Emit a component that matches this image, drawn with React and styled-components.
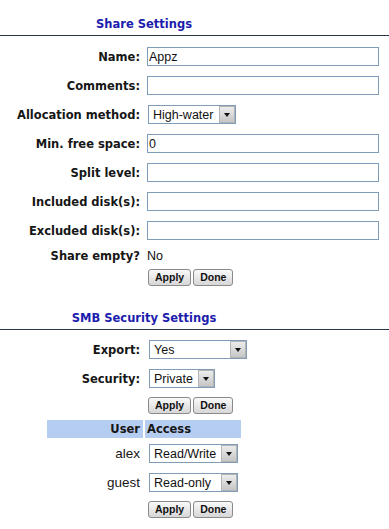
import React from "react";
import styled, { createGlobalStyle } from "styled-components";

const Global = createGlobalStyle`
  html, body { margin: 0; padding: 0; background: #ffffff; }
  body { font-family: "DejaVu Sans", Verdana, sans-serif; color: #161616; }
`;

const Page = styled.div`
  width: 389px;
  display: flex;
  flex-direction: column;
`;

const Section = styled.section`
  display: flex;
  flex-direction: column;
  margin-top: ${(p) => p.$top}px;
`;

const SectionHeader = styled.div`
  border-bottom: 1px solid #26394a;
  padding-bottom: 3px;
`;

const SectionTitle = styled.h2`
  margin: 0;
  width: 288px;
  text-align: center;
  font-family: "DejaVu Sans", Verdana, sans-serif;
  font-weight: bold;
  font-size: 11.5px;
  line-height: 15px;
  color: #1c1cad;
`;

const FormBody = styled.div`
  display: flex;
  flex-direction: column;
  margin-top: ${(p) => p.$top}px;
`;

const Row = styled.div`
  display: grid;
  grid-template-columns: 140px 1fr;
  column-gap: 7px;
  align-items: center;
  height: ${(p) => p.$h}px;
`;

const Label = styled.label`
  text-align: right;
  font-family: "DejaVu Sans", Verdana, sans-serif;
  font-weight: bold;
  font-size: 11.5px;
  color: #161616;
  white-space: nowrap;
`;

const Field = styled.div`
  display: flex;
  align-items: center;
  padding-right: 10px;
  min-width: 0;
`;

const TextInput = styled.input`
  box-sizing: border-box;
  width: 100%;
  height: 19px;
  margin: 0;
  border: 1px solid #7f9db9;
  padding: 0 1px;
  font-family: "Liberation Sans", Arial, sans-serif;
  font-size: 12.5px;
  color: #111;
  background: #fff;
  outline: none;
`;

const ValueText = styled.span`
  font-family: "Liberation Sans", Arial, sans-serif;
  font-size: 12.5px;
  color: #111;
`;

const SelectBox = styled.div`
  box-sizing: border-box;
  display: flex;
  align-items: stretch;
  width: ${(p) => p.$w}px;
  height: 19px;
  margin-left: ${(p) => p.$ml || 0}px;
  border: 1px solid #7f9db9;
  background: #fff;
`;

const NativeSelect = styled.select`
  flex: 1;
  min-width: 0;
  appearance: none;
  -webkit-appearance: none;
  border: none;
  outline: none;
  background: transparent;
  margin: 0;
  padding: 0 0 0 4px;
  font-family: "Liberation Sans", Arial, sans-serif;
  font-size: 12.5px;
  color: #111;
`;

const ArrowBox = styled.span`
  box-sizing: border-box;
  width: 16px;
  margin: 0;
  display: flex;
  align-items: center;
  justify-content: center;
  background: linear-gradient(#ececec, #c6c6c6);
  border: 1px solid #b4b4b4;
  &::after {
    content: "";
    width: 0;
    height: 0;
    border-left: 3.5px solid transparent;
    border-right: 3.5px solid transparent;
    border-top: 4px solid #111;
    margin-top: 1px;
  }
`;

const ButtonBar = styled.div`
  display: flex;
  gap: 2px;
  padding-left: 1px;
`;

const Button = styled.button`
  box-sizing: border-box;
  height: 17px;
  margin: 0;
  padding: 0 6px;
  border: 1px solid #8a8a8a;
  border-radius: 3px;
  background: linear-gradient(#fafafa, #d6d6d6);
  font-family: "Liberation Sans", Arial, sans-serif;
  font-weight: bold;
  font-size: 10.5px;
  line-height: 15px;
  color: #111;
`;

const UserTable = styled.div`
  display: flex;
  flex-direction: column;
  margin-top: 3px;
`;

const UserGrid = styled.div`
  display: grid;
  grid-template-columns: 96px 96px;
  column-gap: 2px;
  margin-left: 47px;
  align-items: center;
  height: ${(p) => p.$h}px;
  margin-bottom: ${(p) => p.$mb || 0}px;
`;

const HeaderCell = styled.div`
  height: 18px;
  line-height: 18px;
  background: #b6cdf2;
  font-family: "DejaVu Sans", Verdana, sans-serif;
  font-weight: bold;
  font-size: 11.5px;
  color: #161616;
  text-align: ${(p) => p.$align};
  padding: ${(p) => (p.$align === "right" ? "0 3px 0 0" : "0 0 0 2px")};
`;

const UserName = styled.span`
  text-align: right;
  padding-right: 3px;
  font-family: "Liberation Sans", Arial, sans-serif;
  font-size: 13.5px;
  color: #161616;
`;

const AccessCell = styled.div`
  display: flex;
  padding-left: 2px;
`;

function Select({ w, ml, value, options }) {
  return (
    <SelectBox $w={w} $ml={ml}>
      <NativeSelect defaultValue={value}>
        {options.map((o) => (
          <option key={o}>{o}</option>
        ))}
      </NativeSelect>
      <ArrowBox />
    </SelectBox>
  );
}

function Buttons() {
  return (
    <ButtonBar>
      <Button>Apply</Button>
      <Button>Done</Button>
    </ButtonBar>
  );
}

const textFields = [
  ["Name:", "Appz"],
  ["Comments:", ""],
];
const textFields2 = [
  ["Min. free space:", "0"],
  ["Split level:", ""],
  ["Included disk(s):", ""],
  ["Excluded disk(s):", ""],
];

const users = [
  ["alex", "Read/Write"],
  ["guest", "Read-only"],
];

export default function App() {
  return (
    <Page>
      <Global />
      <Section $top={17}>
        <SectionHeader>
          <SectionTitle>Share Settings</SectionTitle>
        </SectionHeader>
        <FormBody $top={6}>
          {textFields.map(([l, v]) => (
            <Row $h={29} key={l}>
              <Label>{l}</Label>
              <Field>
                <TextInput defaultValue={v} />
              </Field>
            </Row>
          ))}
          <Row $h={29}>
            <Label>Allocation method:</Label>
            <Field>
              <Select w={88} ml={1} value="High-water" options={["High-water", "Fill-up", "Most-free"]} />
            </Field>
          </Row>
          {textFields2.map(([l, v]) => (
            <Row $h={29} key={l}>
              <Label>{l}</Label>
              <Field>
                <TextInput defaultValue={v} />
              </Field>
            </Row>
          ))}
          <Row $h={21}>
            <Label>Share empty?</Label>
            <Field>
              <ValueText>No</ValueText>
            </Field>
          </Row>
          <Row $h={22}>
            <span />
            <Buttons />
          </Row>
        </FormBody>
      </Section>

      <Section $top={23}>
        <SectionHeader>
          <SectionTitle>SMB Security Settings</SectionTitle>
        </SectionHeader>
        <FormBody $top={5}>
          <Row $h={29}>
            <Label>Export:</Label>
            <Field>
              <Select w={98} ml={2} value="Yes" options={["Yes", "No"]} />
            </Field>
          </Row>
          <Row $h={29}>
            <Label>Security:</Label>
            <Field>
              <Select w={66} ml={2} value="Private" options={["Public", "Secure", "Private"]} />
            </Field>
          </Row>
          <Row $h={24}>
            <span />
            <Buttons />
          </Row>
          <UserTable>
            <UserGrid $h={18} $mb={1}>
              <HeaderCell $align="right">User</HeaderCell>
              <HeaderCell $align="left">Access</HeaderCell>
            </UserGrid>
            {users.map(([u, a]) => (
              <UserGrid $h={29} key={u}>
                <UserName>{u}</UserName>
                <AccessCell>
                  <Select w={89} ml={2} value={a} options={["Read/Write", "Read-only", "No Access"]} />
                </AccessCell>
              </UserGrid>
            ))}
            <UserGrid $h={24}>
              <span />
              <AccessCell>
                <ButtonBar>
                  <Button>Apply</Button>
                  <Button>Done</Button>
                </ButtonBar>
              </AccessCell>
            </UserGrid>
          </UserTable>
        </FormBody>
      </Section>
    </Page>
  );
}
